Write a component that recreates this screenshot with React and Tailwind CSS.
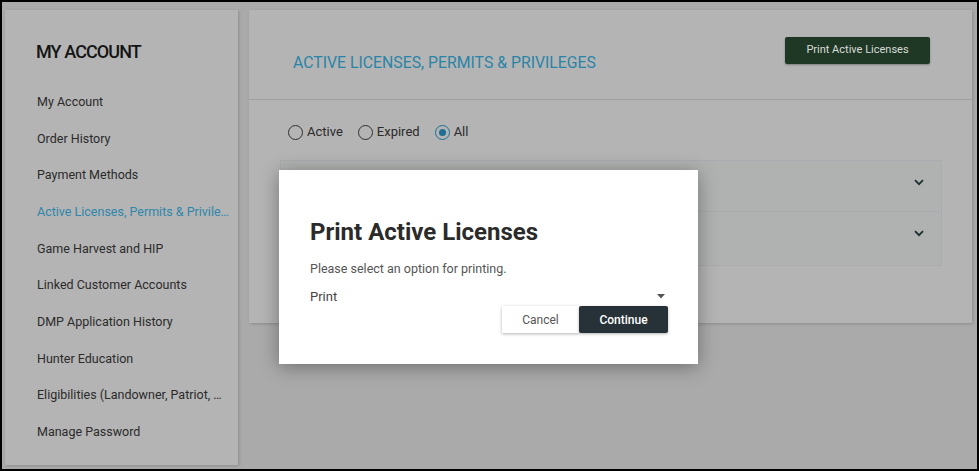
import React from 'react'

const menu = [
  'My Account',
  'Order History',
  'Payment Methods',
  'Active Licenses, Permits & Privileges',
  'Game Harvest and HIP',
  'Linked Customer Accounts',
  'DMP Application History',
  'Hunter Education',
  'Eligibilities (Landowner, Patriot, Military)',
  'Manage Password',
]

function Radio({ label, checked }) {
  return (
    <label className="flex items-center gap-[4px] text-[13px] text-[#2a2a2a]">
      <span
        className={
          'flex h-[15px] w-[15px] items-center justify-center rounded-full border-[1.5px] ' +
          (checked ? 'border-[#1d6f93]' : 'border-[#2f2f2f]')
        }
      >
        {checked && <span className="h-[7px] w-[7px] rounded-full bg-[#1d6f93]" />}
      </span>
      <span className="-mt-[2px]">{label}</span>
    </label>
  )
}

function Chevron() {
  return (
    <svg width="10" height="7" viewBox="0 0 10 7" fill="none">
      <path d="M1 1.2 5 5.2 9 1.2" stroke="#1f2e2e" strokeWidth="1.8" />
    </svg>
  )
}

export default function App() {
  return (
    <div className="relative h-[471px] w-[979px] overflow-hidden border-2 border-black bg-[#a9aaa9] font-['Roboto','Liberation_Sans',sans-serif]">
      <div className="ml-[3px] mt-[8px] flex items-start gap-[11px]">
        {/* sidebar */}
        <aside className="h-[455px] w-[233px] bg-[#b4b4b4] pl-[32px] pt-[30px] shadow-[1px_1px_3px_rgba(0,0,0,0.18)]">
          <h2 className="-ml-[1px] text-[18px] font-medium leading-[24px] tracking-[-0.9px] text-[#141414]">MY ACCOUNT</h2>
          <ul className="mt-[20px]">
            {menu.map((m, i) => (
              <li
                key={m}
                className={
                  'flex h-[36.7px] w-[193px] items-center text-[12.5px] ' +
                  (i === 3 ? 'text-[#2f86ab]' : 'text-[#2b2b2b]')
                }
              >
                <span className="truncate">{m}</span>
              </li>
            ))}
          </ul>
        </aside>

        {/* main card */}
        <main className="h-[313px] w-[723px] bg-[#b4b4b4] shadow-[1px_1px_3px_rgba(0,0,0,0.18)]">
          <div className="flex h-[90px] items-start justify-between border-b border-[#9f9f9f] pl-[44px] pr-[42px]">
            <h1 className="mt-[44px] text-[15.8px] leading-[18px] text-[#2a84a7]">
              ACTIVE LICENSES, PERMITS &amp; PRIVILEGES
            </h1>
            <button className="mt-[27px] h-[27px] w-[145px] rounded-[2px] bg-[#1f3825] text-[11px] text-[#d8dcd8] shadow-[0_1px_2px_rgba(0,0,0,0.3)]">
              Print Active Licenses
            </button>
          </div>
          <div className="flex gap-[15px] pl-[39px] pt-[24px]">
            <Radio label="Active" />
            <Radio label="Expired" />
            <Radio label="All" checked />
          </div>
          <div className="ml-[31px] mt-[18px] w-[662px] border border-[#a8acae] bg-[#b0b1b1]">
            <div className="flex h-[51px] items-center justify-end border-b border-[#a7abb0] pb-[6px] pr-[17px]">
              <Chevron />
            </div>
            <div className="flex h-[53px] items-center justify-end pb-[10px] pr-[17px]">
              <Chevron />
            </div>
          </div>
        </main>
      </div>

      {/* modal */}
      <div className="absolute left-[277px] top-[168px] flex h-[194px] w-[419px] flex-col bg-white pl-[31px] pr-[30px] shadow-[0_3px_18px_rgba(0,0,0,0.35)]">
        <h3 className="mt-[47px] text-[24px] font-bold leading-[30px] text-[#2b2b2b]">Print Active Licenses</h3>
        <p className="mt-[14px] text-[12.5px] leading-[16px] text-[#555]">Please select an option for printing.</p>
        <div className="mt-[12px] flex items-center justify-between text-[13px] leading-[16px] text-[#444]">
          <span>Print</span>
          <svg width="8" height="5" viewBox="0 0 8 5" className="mr-[3px] -mt-[2px]">
            <path d="M0 0h8L4 4.5z" fill="#555" />
          </svg>
        </div>
        <div className="mt-[1px] flex justify-end">
          <button className="h-[27px] w-[77px] bg-white text-[12px] text-[#555] shadow-[0_1px_3px_rgba(0,0,0,0.3)]">Cancel</button>
          <button className="h-[27px] w-[89px] rounded-[2px] bg-[#263238] text-[12px] font-medium text-white shadow-[0_1px_3px_rgba(0,0,0,0.3)]">Continue</button>
        </div>
      </div>
    </div>
  )
}
